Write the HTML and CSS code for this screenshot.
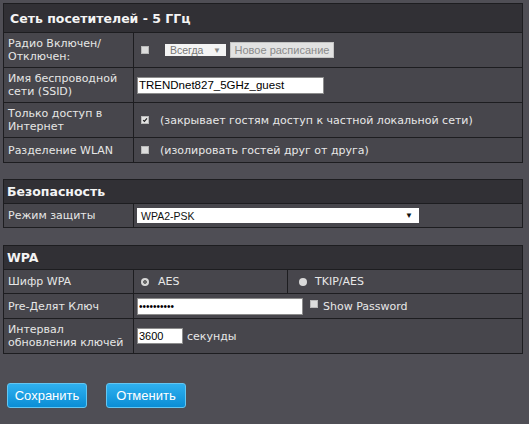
FILE: index.html
```html
<!DOCTYPE html>
<html lang="ru">
<head>
<meta charset="utf-8">
<title>Сеть посетителей - 5 ГГц</title>
<link rel="stylesheet" href="styles.css">
</head>
<body>
<div class="page">
  <table class="panel">
    <colgroup><col class="col-label"><col></colgroup>
    <tr class="row-head-lg"><th colspan="2" class="head head-lg">Сеть посетителей - 5 ГГц</th></tr>
    <tr class="row-tall">
      <td class="label">Радио Включен/<br>Отключен:</td>
      <td class="value">
        <div class="line">
          <span class="cb"></span>
          <span class="select select-small"><span>Всегда</span><span class="arrow arrow-gray">▼</span></span>
          <button class="btn-sched" type="button" disabled>Новое расписание</button>
        </div>
      </td>
    </tr>
    <tr class="row-tall">
      <td class="label">Имя беспроводной<br>сети (SSID)</td>
      <td class="value"><input class="field field-ssid" type="text" value="TRENDnet827_5GHz_guest"></td>
    </tr>
    <tr class="row-tall">
      <td class="label">Только доступ в<br>Интернет</td>
      <td class="value">
        <div class="line">
          <span class="cb cb-checked"><svg viewBox="0 0 8 8" width="8" height="8"><path d="M1.5 4.2 L3.2 5.8 L6.6 1.8" fill="none" stroke="#222" stroke-width="1.6"/></svg></span>
          <span class="note">(закрывает гостям доступ к частной локальной сети)</span>
        </div>
      </td>
    </tr>
    <tr class="row-short">
      <td class="label">Разделение WLAN</td>
      <td class="value">
        <div class="line">
          <span class="cb"></span>
          <span class="note">(изолировать гостей друг от друга)</span>
        </div>
      </td>
    </tr>
  </table>

  <table class="panel panel-gap1">
    <colgroup><col class="col-label"><col></colgroup>
    <tr class="row-head"><th colspan="2" class="head">Безопасность</th></tr>
    <tr class="row-single">
      <td class="label">Режим защиты</td>
      <td class="value">
        <span class="select select-wide"><span>WPA2-PSK</span><span class="arrow">▼</span></span>
      </td>
    </tr>
  </table>

  <table class="panel panel-gap2">
    <colgroup><col class="col-label"><col class="col-mid"><col></colgroup>
    <tr class="row-head"><th colspan="3" class="head">WPA</th></tr>
    <tr class="row-single">
      <td class="label">Шифр WPA</td>
      <td class="value"><div class="line"><span class="radio radio-on"></span><span class="opt">AES</span></div></td>
      <td class="value"><div class="line"><span class="radio radio-off"></span><span class="opt opt-tkip">TKIP/AES</span></div></td>
    </tr>
    <tr class="row-short">
      <td class="label">Pre-Делят Ключ</td>
      <td class="value" colspan="2">
        <div class="line">
          <input class="field field-key" type="password" value="1234567890">
          <span class="cb cb-show"></span>
          <span class="note">Show Password</span>
        </div>
      </td>
    </tr>
    <tr class="row-tall">
      <td class="label">Интервал<br>обновления ключей</td>
      <td class="value" colspan="2">
        <div class="line">
          <input class="field field-interval" type="text" value="3600">
          <span class="note note-unit">секунды</span>
        </div>
      </td>
    </tr>
  </table>

  <div class="actions">
    <button class="btn" type="button">Сохранить</button>
    <button class="btn" type="button">Отменить</button>
  </div>
</div>
</body>
</html>
```
FILE: styles.css
```css
html, body {
  margin: 0;
  padding: 0;
}
body {
  background: #4f4e55;
  color: #e8e8e8;
  font-family: "DejaVu Sans", Verdana, sans-serif;
  font-size: 11px;
}
.page {
  padding: 3px 7px 0 3px;
}
.panel {
  border-collapse: collapse;
  width: 520px;
  table-layout: fixed;
}
.panel-gap1 { margin-top: 16px; }
.panel-gap2 { margin-top: 17px; }
.col-label { width: 130px; }
.col-mid { width: 154px; }
.panel th, .panel td {
  border: 1px solid #1d1d20;
  padding: 0;
  vertical-align: middle;
}
.head {
  background: #313035;
  color: #f4f4f4;
  font-weight: bold;
  font-size: 12.5px;
  text-align: left;
  padding: 0 3px !important;
}
.head-lg {
  padding: 0 6px !important;
}
.row-head-lg { height: 29px; }
.row-head { height: 24px; }
.row-tall { height: 35px; }
.row-short { height: 25px; }
.row-single { height: 24px; }
.panel td {
  background: #47464c;
}
.label {
  padding: 0 4px !important;
  line-height: 13px;
  color: #e6e6e6;
}
.value {
  padding: 0 3px !important;
}
.line {
  display: flex;
  align-items: center;
}
.cb {
  box-sizing: border-box;
  width: 8px;
  height: 8px;
  margin: 0 0 0 4px;
  background: #dcdcdc;
  border: 1px solid #b8b8b8;
  display: inline-flex;
  align-items: center;
  justify-content: center;
  flex: none;
}
.cb svg { display: block; }
.cb-checked { background: #e4e4e4; }
.cb-show {
  margin-left: 7px;
  margin-right: 5px;
  align-self: flex-start;
  margin-top: 2px;
}
.note { margin-left: 11px; white-space: nowrap; }
.cb-show + .note { margin-left: 0; }
.note-unit { margin-left: 4px; }
.select {
  box-sizing: border-box;
  display: inline-flex;
  align-items: center;
  justify-content: space-between;
  background: #fff;
  color: #111;
  font-family: "Liberation Sans", Arial, sans-serif;
  font-size: 11px;
}
.select-small {
  width: 61px;
  height: 12px;
  margin-left: 16px;
  padding: 0 5px;
  color: #777;
  background: #f4f4f4;
  font-size: 10.5px;
}
.select-wide {
  width: 282px;
  height: 15px;
  padding: 0 6px 0 4px;
  font-size: 10.5px;
}
.arrow { font-size: 8px; color: #111; }
.arrow-gray { color: #888; font-size: 8px; }
.btn-sched {
  box-sizing: border-box;
  margin-left: 4px;
  height: 16px;
  width: 104px;
  padding: 0;
  border: 1px solid #c4c4c4;
  background: #e2e2e2;
  color: #8a8a8a;
  font-family: "Liberation Sans", Arial, sans-serif;
  font-size: 11px;
}
.field {
  box-sizing: border-box;
  height: 17px;
  border: 1px solid #8c8c8c;
  background: #fff;
  color: #000;
  padding: 0 1px;
  margin: 0;
  font-family: "Liberation Sans", Arial, sans-serif;
  font-size: 11.5px;
  display: block;
}
.field-ssid { width: 187px; }
.field-key { width: 166px; font-size: 10px; }
.field-interval { width: 46px; height: 16px; font-size: 11px; }
.radio {
  box-sizing: border-box;
  width: 8px;
  height: 8px;
  border-radius: 50%;
  margin-left: 4px;
  flex: none;
}
.radio-on {
  background: radial-gradient(circle, #6a6a6a 0 1.6px, #d6d6d6 2.2px);
}
.radio-off {
  background: #d9d9d9;
  margin-left: 8px;
}
.opt { margin-left: 9px; }
.opt-tkip { margin-left: 8px; }
.actions {
  display: flex;
  gap: 19px;
  margin: 29px 0 0 4px;
}
.btn {
  box-sizing: border-box;
  width: 80px;
  height: 25px;
  border: 1px solid #62c6f2;
  border-radius: 3px;
  background: linear-gradient(#2fb0ef, #0a8ed6);
  color: #fff;
  font-family: "Liberation Sans", Arial, sans-serif;
  font-size: 13px;
  padding: 0;
}
.btn + .btn { width: 80px; }
```
